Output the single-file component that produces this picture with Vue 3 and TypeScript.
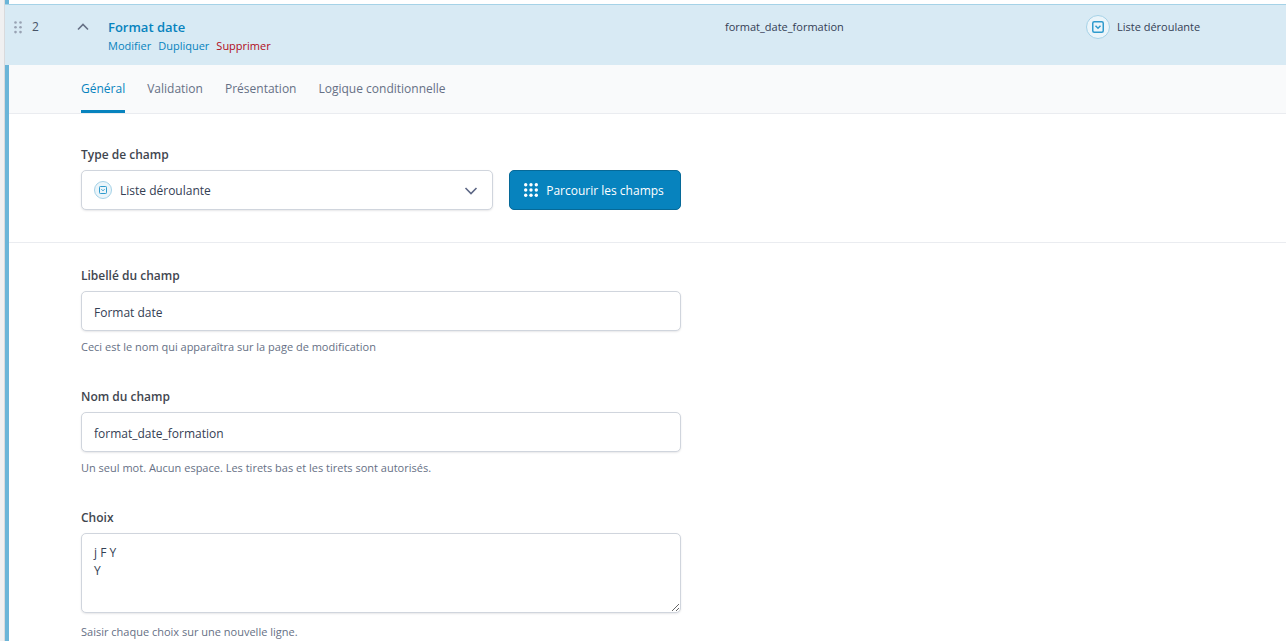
<script setup lang="ts">
import { ref } from 'vue'

const tabs: string[] = ['Général', 'Validation', 'Présentation', 'Logique conditionnelle']
const activeTab = ref<string>('Général')
const fieldType = ref<string>('Liste déroulante')
const label = ref<string>('Format date')
const name = ref<string>('format_date_formation')
const choices = ref<string>('j F Y\nY')
const dots: number[] = [0, 1, 2]
</script>

<template>
  <main class="field">
    <header class="head">
      <div class="order">
        <svg class="grip" width="8" height="13" viewBox="0 0 8 13" aria-hidden="true">
          <template v-for="r in dots" :key="r">
            <circle cx="1.5" :cy="1.5 + r * 4.8" r="1.3" />
            <circle cx="6.5" :cy="1.5 + r * 4.8" r="1.3" />
          </template>
        </svg>
        <span class="number">2</span>
        <button class="toggle" type="button" aria-label="Replier le champ">
          <svg width="12" height="8" viewBox="0 0 12 8" fill="none" aria-hidden="true">
            <path d="M1 6.5 6 1.5l5 5" stroke="#667085" stroke-width="1.6" />
          </svg>
        </button>
      </div>
      <div>
        <a class="title" href="#">Format date</a>
        <nav class="actions" aria-label="Actions">
          <a href="#">Modifier</a>
          <a href="#">Dupliquer</a>
          <a class="danger" href="#">Supprimer</a>
        </nav>
      </div>
      <div class="cell">{{ name }}</div>
      <div class="cell kind">
        <span class="badge">
          <svg width="12" height="12" viewBox="0 0 12 12" fill="none" aria-hidden="true">
            <rect x=".75" y=".75" width="10.5" height="10.5" rx="1.5" stroke="#2f9bcd" stroke-width="1.5" />
            <path d="m3.5 4.8 2.5 2.4 2.5-2.4" stroke="#2f9bcd" stroke-width="1.5" />
          </svg>
        </span>
        <span>{{ fieldType }}</span>
      </div>
    </header>

    <div class="body">
      <nav class="tabs" aria-label="Réglages du champ">
        <a v-for="tab in tabs" :key="tab" href="#" :class="{ active: tab === activeTab }" @click.prevent="activeTab = tab">{{ tab }}</a>
      </nav>

      <section class="group type-group">
        <label for="type">Type de champ</label>
        <div class="type-row">
          <div class="select">
            <span class="badge small">
              <svg width="8" height="8" viewBox="0 0 8 8" fill="none" aria-hidden="true">
                <rect x=".5" y=".5" width="7" height="7" rx=".8" stroke="#2f9bcd" />
                <path d="M2.4 3.2 4 4.8l1.6-1.6" stroke="#2f9bcd" />
              </svg>
            </span>
            <select id="type" v-model="fieldType">
              <option>Liste déroulante</option>
            </select>
            <svg class="arrow" width="14" height="8" viewBox="0 0 14 8" fill="none" aria-hidden="true">
              <path d="m1.5 1 5.5 5.5L12.5 1" stroke="#5d6785" stroke-width="1.6" />
            </svg>
          </div>
          <button class="browse" type="button">
            <svg width="14" height="14" viewBox="0 0 14 14" fill="#fff" aria-hidden="true">
              <template v-for="r in dots" :key="r">
                <circle v-for="c in dots" :key="c" :cx="1.7 + c * 5.3" :cy="1.7 + r * 5.3" r="1.7" />
              </template>
            </svg>
            <span>Parcourir les champs</span>
          </button>
        </div>
      </section>

      <section class="group settings">
        <div>
          <label for="label">Libellé du champ</label>
          <input id="label" v-model="label" type="text" />
          <p>Ceci est le nom qui apparaîtra sur la page de modification</p>
        </div>
        <div>
          <label for="name">Nom du champ</label>
          <input id="name" v-model="name" type="text" />
          <p>Un seul mot. Aucun espace. Les tirets bas et les tirets sont autorisés.</p>
        </div>
        <div>
          <label for="choices">Choix</label>
          <textarea id="choices" v-model="choices"></textarea>
          <p>Saisir chaque choix sur une nouvelle ligne.</p>
        </div>
      </section>
    </div>
  </main>
</template>

<style>
body {
  background: #f0f0f1;
}
</style>

<style scoped>
* {
  box-sizing: border-box;
}
.field {
  min-height: 100vh;
  margin-left: 4px;
  border-left: 1px solid #d9dadc;
  background: linear-gradient(to right, #6bb5d8 4px, #fff 4px);
  padding-top: 4px;
  display: flex;
  flex-direction: column;
  font-family: "Segoe UI", "Open Sans", "Noto Sans", sans-serif;
  font-size: 12px;
  line-height: 18px;
  color: #344054;
}
a {
  color: #0783be;
  text-decoration: none;
}
.head {
  display: grid;
  grid-template-columns: 103px 617fr 361fr 200fr;
  height: 61px;
  padding-top: 12px;
  border-top: 1px solid #a5d2e7;
  background: #d8eaf4;
}
.order {
  display: flex;
  align-items: center;
  height: 20px;
  padding-left: 9px;
}
.grip {
  fill: #98a2b3;
}
.number {
  width: 55px;
  padding-left: 10px;
  color: #475467;
}
.toggle {
  display: flex;
  padding: 0;
  border: 0;
  background: none;
}
.title {
  display: block;
  font-size: 13px;
  font-weight: 600;
  line-height: 20px;
}
.actions {
  display: flex;
  gap: 7px;
  font-size: 11px;
}
.actions .danger {
  color: #b10c1a;
}
.cell {
  font-size: 11px;
  line-height: 20px;
}
.kind {
  display: flex;
  align-items: center;
  align-self: start;
  height: 20px;
  gap: 7px;
}
.badge {
  display: flex;
  align-items: center;
  justify-content: center;
  width: 24px;
  height: 24px;
  border: 1px solid #a5d2e7;
  border-radius: 50%;
  background: #ebf5fa;
}
.badge.small {
  width: 18px;
  height: 18px;
}
.body {
  flex: 1;
  margin-left: 4px;
}
.tabs {
  display: flex;
  gap: 22px;
  height: 49px;
  padding-left: 72px;
  border-bottom: 1px solid #eaecf0;
  background: #f9fafb;
}
.tabs a {
  height: 48px;
  padding-top: 15px;
  color: #667085;
}
.tabs .active {
  border-bottom: 3px solid #0783be;
  color: #0783be;
}
.group {
  padding-left: 72px;
  padding-right: 72px;
}
.type-group {
  padding-top: 32px;
  padding-bottom: 32px;
  border-bottom: 1px solid #eaecf0;
}
.type-row {
  display: flex;
  gap: 16px;
  max-width: 600px;
}
label {
  display: block;
  margin-bottom: 6px;
  font-weight: 600;
  color: #3f464f;
}
.select {
  position: relative;
  flex: 1;
}
.select .badge {
  position: absolute;
  top: 11px;
  left: 13px;
}
.arrow {
  position: absolute;
  top: 17px;
  right: 15px;
  pointer-events: none;
}
select,
input,
textarea {
  display: block;
  width: 100%;
  height: 40px;
  padding: 2px 12px 0;
  border: 1px solid #d0d5dd;
  border-radius: 5px;
  outline: 0;
  background: #fff;
  box-shadow: 0 1px 2px rgba(16, 24, 40, 0.1);
  font: inherit;
  color: #344054;
}
select {
  appearance: none;
  padding-left: 38px;
}
.browse {
  display: flex;
  align-items: center;
  justify-content: center;
  gap: 8px;
  width: 172px;
  height: 40px;
  padding: 0 2px 0 0;
  border: 1px solid #066998;
  border-radius: 5px;
  background: #0783be;
  font: inherit;
  color: #fff;
}
.browse span {
  padding-top: 2px;
}
.settings {
  display: flex;
  flex-direction: column;
  gap: 32px;
  padding-top: 24px;
}
.settings > div {
  max-width: 600px;
}
textarea {
  height: 80px;
  padding-top: 10px;
  resize: vertical;
}
p {
  margin: 7px 0 0;
  font-size: 11px;
  color: #667085;
}
textarea + p {
  margin-top: 10px;
}
</style>
